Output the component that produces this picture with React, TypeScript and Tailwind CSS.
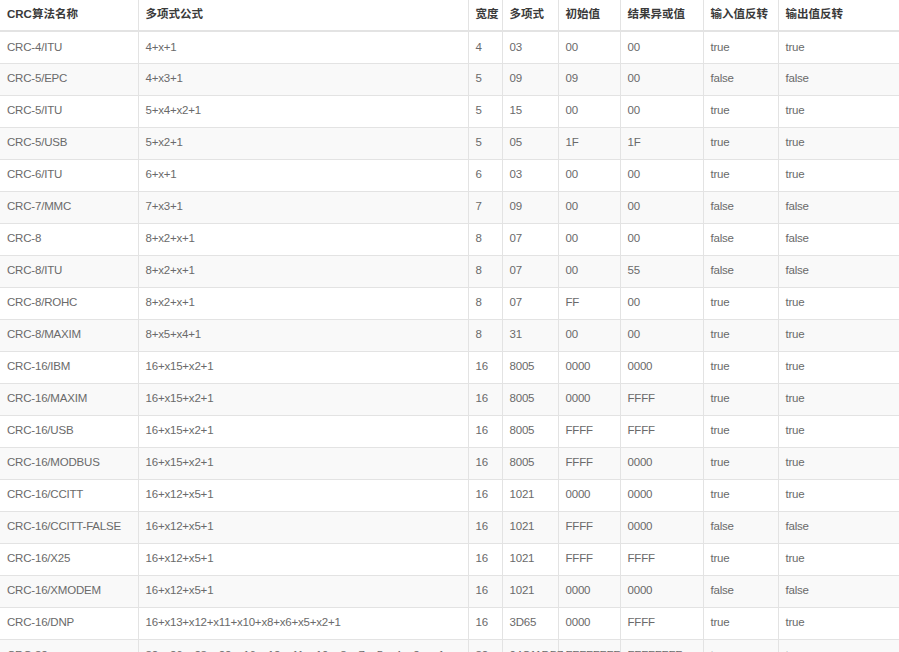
const rows: string[][] = [
["CRC-4/ITU","4+x+1","4","03","00","00","true","true"],
["CRC-5/EPC","4+x3+1","5","09","09","00","false","false"],
["CRC-5/ITU","5+x4+x2+1","5","15","00","00","true","true"],
["CRC-5/USB","5+x2+1","5","05","1F","1F","true","true"],
["CRC-6/ITU","6+x+1","6","03","00","00","true","true"],
["CRC-7/MMC","7+x3+1","7","09","00","00","false","false"],
["CRC-8","8+x2+x+1","8","07","00","00","false","false"],
["CRC-8/ITU","8+x2+x+1","8","07","00","55","false","false"],
["CRC-8/ROHC","8+x2+x+1","8","07","FF","00","true","true"],
["CRC-8/MAXIM","8+x5+x4+1","8","31","00","00","true","true"],
["CRC-16/IBM","16+x15+x2+1","16","8005","0000","0000","true","true"],
["CRC-16/MAXIM","16+x15+x2+1","16","8005","0000","FFFF","true","true"],
["CRC-16/USB","16+x15+x2+1","16","8005","FFFF","FFFF","true","true"],
["CRC-16/MODBUS","16+x15+x2+1","16","8005","FFFF","0000","true","true"],
["CRC-16/CCITT","16+x12+x5+1","16","1021","0000","0000","true","true"],
["CRC-16/CCITT-FALSE","16+x12+x5+1","16","1021","FFFF","0000","false","false"],
["CRC-16/X25","16+x12+x5+1","16","1021","FFFF","FFFF","true","true"],
["CRC-16/XMODEM","16+x12+x5+1","16","1021","0000","0000","false","false"],
["CRC-16/DNP","16+x13+x12+x11+x10+x8+x6+x5+x2+1","16","3D65","0000","FFFF","true","true"],
["CRC-32","32+x26+x23+x22+x16+x12+x11+x10+x8+x7+x5+x4+x2+x+1","32","04C11DB7","FFFFFFFF","FFFFFFFF","true","true"],
];
const heads = ["CRC算法名称","多项式公式","宽度","多项式","初始值","结果异或值","输入值反转","输出值反转"];
const widths = [138,330,34,56,62,83,75,121];
export default function App() {
  return (
    <div className="w-[899px] h-[652px] overflow-hidden bg-white" style={{fontFamily:'"Liberation Sans","Noto Sans CJK SC",sans-serif'}}>
      <table className="border-collapse table-fixed w-[899px] text-[11.5px]">
        <colgroup>{widths.map((w,i)=><col key={i} style={{width:w}} />)}</colgroup>
        <thead>
          <tr className="h-[31px]">
            {heads.map((h,i)=><th key={i} className="text-left font-bold text-[#3a3a3a] px-[7px] border-l border-b-2 border-[#e3e3e3] first:border-l-0 whitespace-nowrap">{h}</th>)}
          </tr>
        </thead>
        <tbody>
          {rows.map((r,ri)=>(
            <tr key={ri} className={`h-[32px] ${ri%2===1?"bg-[#f9f9f9]":"bg-white"}`}>
              {r.map((c,ci)=><td key={ci} className="px-[7px] text-[#6a6a6a] border-l border-t border-[#e3e3e3] first:border-l-0 whitespace-nowrap tracking-[-0.2px]">{c}</td>)}
            </tr>
          ))}
        </tbody>
      </table>
    </div>
  );
}
